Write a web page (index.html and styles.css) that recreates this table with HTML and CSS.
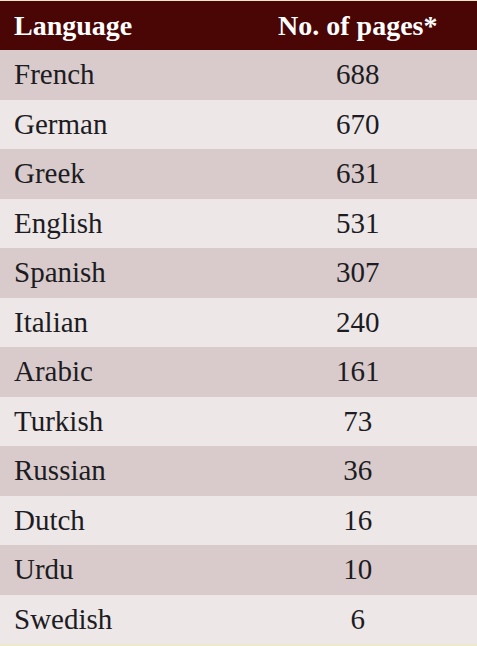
FILE: index.html
```html
<!DOCTYPE html>
<html>
<head>
<meta charset="utf-8">
<link rel="stylesheet" href="styles.css">
</head>
<body>
<div class="table">
  <div class="row head"><div class="c1">Language</div><div class="c2">No. of pages*</div></div>
  <div class="row odd"><div class="c1">French</div><div class="c2">688</div></div>
  <div class="row even"><div class="c1">German</div><div class="c2">670</div></div>
  <div class="row odd"><div class="c1">Greek</div><div class="c2">631</div></div>
  <div class="row even"><div class="c1">English</div><div class="c2">531</div></div>
  <div class="row odd"><div class="c1">Spanish</div><div class="c2">307</div></div>
  <div class="row even"><div class="c1">Italian</div><div class="c2">240</div></div>
  <div class="row odd"><div class="c1">Arabic</div><div class="c2">161</div></div>
  <div class="row even"><div class="c1">Turkish</div><div class="c2">73</div></div>
  <div class="row odd"><div class="c1">Russian</div><div class="c2">36</div></div>
  <div class="row even"><div class="c1">Dutch</div><div class="c2">16</div></div>
  <div class="row odd"><div class="c1">Urdu</div><div class="c2">10</div></div>
  <div class="row even"><div class="c1">Swedish</div><div class="c2">6</div></div>
</div>
</body>
</html>
```
FILE: styles.css
```css
html, body {
  margin: 0;
  padding: 0;
  background: #eee8cc;
}
body {
  width: 477px;
  height: 646px;
  padding-top: 1px;
  box-sizing: border-box;
  font-family: "Liberation Serif", "Times New Roman", serif;
}
.table {
  display: grid;
  grid-template-columns: 1fr;
  grid-template-rows: 49px repeat(12, 49.5px);
}
.row {
  display: grid;
  grid-template-columns: 1fr 1fr;
  align-items: center;
  font-size: 29px;
  color: #1c1c22;
}
.row .c1 {
  padding-left: 14px;
}
.row .c2 {
  text-align: center;
}
.head {
  background: #4a0505;
  color: #ffffff;
  font-weight: bold;
  font-size: 28px;
}
.odd {
  background: #d9cbcc;
}
.even {
  background: #ede7e8;
}
```
